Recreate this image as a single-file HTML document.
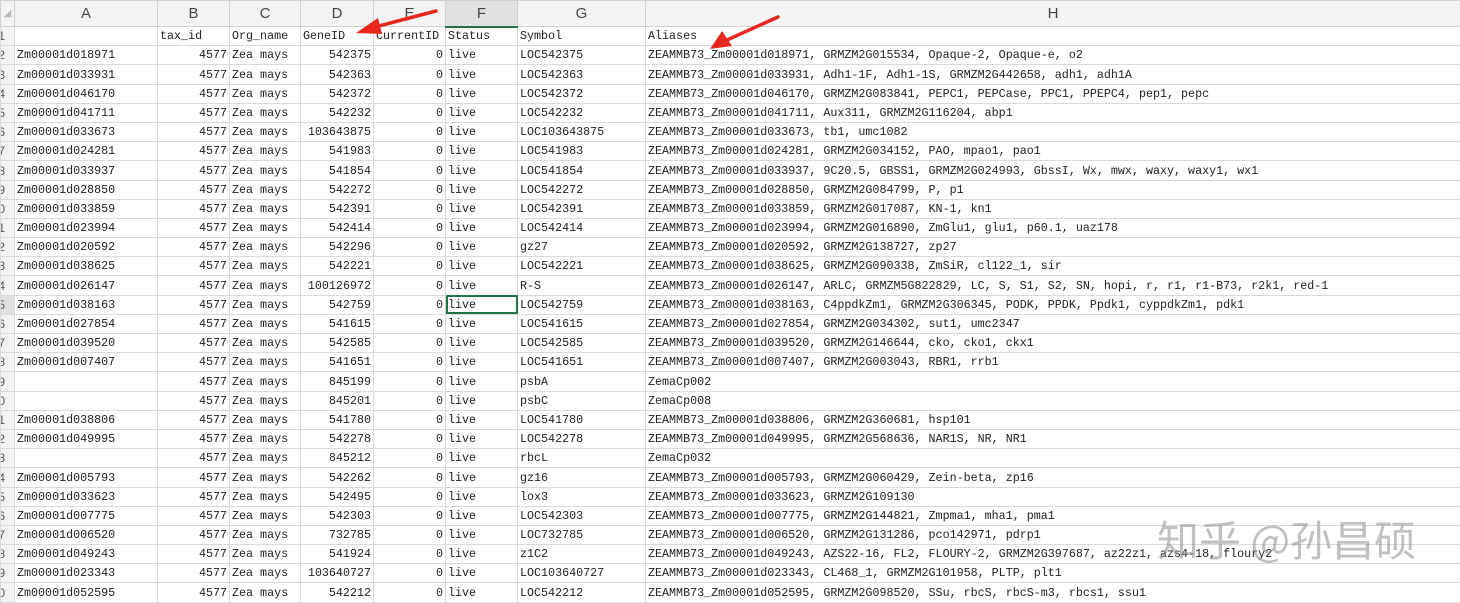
<!DOCTYPE html>
<html><head><meta charset="utf-8"><style>
*{margin:0;padding:0;box-sizing:border-box}
body{width:1460px;height:602px;overflow:hidden;background:#fff;position:relative;font-family:"Liberation Mono","Noto Sans CJK SC",monospace;font-size:11.7px;color:#222}
table{border-collapse:collapse;table-layout:fixed;position:absolute;left:0;top:0;width:1460px}
td{border:1px solid #dadada;height:19.2px;padding:0 2px;white-space:nowrap;overflow:hidden;line-height:17px;vertical-align:bottom}
tr.h td{height:26px;background:#f3f3f3;color:#444;font-family:"Liberation Sans",sans-serif;font-size:15px;text-align:center;vertical-align:middle;border-color:#d0d0d0}
tr.h td.sel{background:#e1e1e1;border-bottom:2px solid #217346}
td.n{background:#f3f3f3;padding:0;color:#555;font-family:"Liberation Sans",sans-serif;font-size:12px}
td.n span{display:block;width:30px;margin-left:-26px;text-align:right}
td.r{text-align:right}
td.cur{outline:2px solid #217346;outline-offset:-2px}
.wm{position:absolute;left:1157px;top:508px;font-family:"Noto Sans CJK SC",sans-serif;font-size:42px;color:rgba(140,140,140,.55);white-space:nowrap}
</style></head><body>
<table>
<colgroup><col style="width:14px"><col style="width:143px"><col style="width:72px"><col style="width:71px"><col style="width:73px"><col style="width:72px"><col style="width:72px"><col style="width:128px"><col style="width:815px"></colgroup>
<tr class="h"><td style="color:#bbb;font-size:10px">◢</td><td>A</td><td>B</td><td>C</td><td>D</td><td>E</td><td class="sel">F</td><td>G</td><td>H</td></tr>
<tr><td class="n"><span>1</span></td><td></td><td>tax_id</td><td>Org_name</td><td>GeneID</td><td>CurrentID</td><td>Status</td><td>Symbol</td><td>Aliases</td></tr>
<tr><td class="n"><span>2</span></td><td>Zm00001d018971</td><td class="r">4577</td><td>Zea mays</td><td class="r">542375</td><td class="r">0</td><td>live</td><td>LOC542375</td><td>ZEAMMB73_Zm00001d018971, GRMZM2G015534, Opaque-2, Opaque-e, o2</td></tr>
<tr><td class="n"><span>3</span></td><td>Zm00001d033931</td><td class="r">4577</td><td>Zea mays</td><td class="r">542363</td><td class="r">0</td><td>live</td><td>LOC542363</td><td>ZEAMMB73_Zm00001d033931, Adh1-1F, Adh1-1S, GRMZM2G442658, adh1, adh1A</td></tr>
<tr><td class="n"><span>4</span></td><td>Zm00001d046170</td><td class="r">4577</td><td>Zea mays</td><td class="r">542372</td><td class="r">0</td><td>live</td><td>LOC542372</td><td>ZEAMMB73_Zm00001d046170, GRMZM2G083841, PEPC1, PEPCase, PPC1, PPEPC4, pep1, pepc</td></tr>
<tr><td class="n"><span>5</span></td><td>Zm00001d041711</td><td class="r">4577</td><td>Zea mays</td><td class="r">542232</td><td class="r">0</td><td>live</td><td>LOC542232</td><td>ZEAMMB73_Zm00001d041711, Aux311, GRMZM2G116204, abp1</td></tr>
<tr><td class="n"><span>6</span></td><td>Zm00001d033673</td><td class="r">4577</td><td>Zea mays</td><td class="r">103643875</td><td class="r">0</td><td>live</td><td>LOC103643875</td><td>ZEAMMB73_Zm00001d033673, tb1, umc1082</td></tr>
<tr><td class="n"><span>7</span></td><td>Zm00001d024281</td><td class="r">4577</td><td>Zea mays</td><td class="r">541983</td><td class="r">0</td><td>live</td><td>LOC541983</td><td>ZEAMMB73_Zm00001d024281, GRMZM2G034152, PAO, mpao1, pao1</td></tr>
<tr><td class="n"><span>8</span></td><td>Zm00001d033937</td><td class="r">4577</td><td>Zea mays</td><td class="r">541854</td><td class="r">0</td><td>live</td><td>LOC541854</td><td>ZEAMMB73_Zm00001d033937, 9C20.5, GBSS1, GRMZM2G024993, GbssI, Wx, mwx, waxy, waxy1, wx1</td></tr>
<tr><td class="n"><span>9</span></td><td>Zm00001d028850</td><td class="r">4577</td><td>Zea mays</td><td class="r">542272</td><td class="r">0</td><td>live</td><td>LOC542272</td><td>ZEAMMB73_Zm00001d028850, GRMZM2G084799, P, p1</td></tr>
<tr><td class="n"><span>10</span></td><td>Zm00001d033859</td><td class="r">4577</td><td>Zea mays</td><td class="r">542391</td><td class="r">0</td><td>live</td><td>LOC542391</td><td>ZEAMMB73_Zm00001d033859, GRMZM2G017087, KN-1, kn1</td></tr>
<tr><td class="n"><span>11</span></td><td>Zm00001d023994</td><td class="r">4577</td><td>Zea mays</td><td class="r">542414</td><td class="r">0</td><td>live</td><td>LOC542414</td><td>ZEAMMB73_Zm00001d023994, GRMZM2G016890, ZmGlu1, glu1, p60.1, uaz178</td></tr>
<tr><td class="n"><span>12</span></td><td>Zm00001d020592</td><td class="r">4577</td><td>Zea mays</td><td class="r">542296</td><td class="r">0</td><td>live</td><td>gz27</td><td>ZEAMMB73_Zm00001d020592, GRMZM2G138727, zp27</td></tr>
<tr><td class="n"><span>13</span></td><td>Zm00001d038625</td><td class="r">4577</td><td>Zea mays</td><td class="r">542221</td><td class="r">0</td><td>live</td><td>LOC542221</td><td>ZEAMMB73_Zm00001d038625, GRMZM2G090338, ZmSiR, cl122_1, sir</td></tr>
<tr><td class="n"><span>14</span></td><td>Zm00001d026147</td><td class="r">4577</td><td>Zea mays</td><td class="r">100126972</td><td class="r">0</td><td>live</td><td>R-S</td><td>ZEAMMB73_Zm00001d026147, ARLC, GRMZM5G822829, LC, S, S1, S2, SN, hopi, r, r1, r1-B73, r2k1, red-1</td></tr>
<tr><td class="n" style="background:#e1e1e1"><span>15</span></td><td>Zm00001d038163</td><td class="r">4577</td><td>Zea mays</td><td class="r">542759</td><td class="r">0</td><td class="cur">live</td><td>LOC542759</td><td>ZEAMMB73_Zm00001d038163, C4ppdkZm1, GRMZM2G306345, PODK, PPDK, Ppdk1, cyppdkZm1, pdk1</td></tr>
<tr><td class="n"><span>16</span></td><td>Zm00001d027854</td><td class="r">4577</td><td>Zea mays</td><td class="r">541615</td><td class="r">0</td><td>live</td><td>LOC541615</td><td>ZEAMMB73_Zm00001d027854, GRMZM2G034302, sut1, umc2347</td></tr>
<tr><td class="n"><span>17</span></td><td>Zm00001d039520</td><td class="r">4577</td><td>Zea mays</td><td class="r">542585</td><td class="r">0</td><td>live</td><td>LOC542585</td><td>ZEAMMB73_Zm00001d039520, GRMZM2G146644, cko, cko1, ckx1</td></tr>
<tr><td class="n"><span>18</span></td><td>Zm00001d007407</td><td class="r">4577</td><td>Zea mays</td><td class="r">541651</td><td class="r">0</td><td>live</td><td>LOC541651</td><td>ZEAMMB73_Zm00001d007407, GRMZM2G003043, RBR1, rrb1</td></tr>
<tr><td class="n"><span>19</span></td><td></td><td class="r">4577</td><td>Zea mays</td><td class="r">845199</td><td class="r">0</td><td>live</td><td>psbA</td><td>ZemaCp002</td></tr>
<tr><td class="n"><span>20</span></td><td></td><td class="r">4577</td><td>Zea mays</td><td class="r">845201</td><td class="r">0</td><td>live</td><td>psbC</td><td>ZemaCp008</td></tr>
<tr><td class="n"><span>21</span></td><td>Zm00001d038806</td><td class="r">4577</td><td>Zea mays</td><td class="r">541780</td><td class="r">0</td><td>live</td><td>LOC541780</td><td>ZEAMMB73_Zm00001d038806, GRMZM2G360681, hsp101</td></tr>
<tr><td class="n"><span>22</span></td><td>Zm00001d049995</td><td class="r">4577</td><td>Zea mays</td><td class="r">542278</td><td class="r">0</td><td>live</td><td>LOC542278</td><td>ZEAMMB73_Zm00001d049995, GRMZM2G568636, NAR1S, NR, NR1</td></tr>
<tr><td class="n"><span>23</span></td><td></td><td class="r">4577</td><td>Zea mays</td><td class="r">845212</td><td class="r">0</td><td>live</td><td>rbcL</td><td>ZemaCp032</td></tr>
<tr><td class="n"><span>24</span></td><td>Zm00001d005793</td><td class="r">4577</td><td>Zea mays</td><td class="r">542262</td><td class="r">0</td><td>live</td><td>gz16</td><td>ZEAMMB73_Zm00001d005793, GRMZM2G060429, Zein-beta, zp16</td></tr>
<tr><td class="n"><span>25</span></td><td>Zm00001d033623</td><td class="r">4577</td><td>Zea mays</td><td class="r">542495</td><td class="r">0</td><td>live</td><td>lox3</td><td>ZEAMMB73_Zm00001d033623, GRMZM2G109130</td></tr>
<tr><td class="n"><span>26</span></td><td>Zm00001d007775</td><td class="r">4577</td><td>Zea mays</td><td class="r">542303</td><td class="r">0</td><td>live</td><td>LOC542303</td><td>ZEAMMB73_Zm00001d007775, GRMZM2G144821, Zmpma1, mha1, pma1</td></tr>
<tr><td class="n"><span>27</span></td><td>Zm00001d006520</td><td class="r">4577</td><td>Zea mays</td><td class="r">732785</td><td class="r">0</td><td>live</td><td>LOC732785</td><td>ZEAMMB73_Zm00001d006520, GRMZM2G131286, pco142971, pdrp1</td></tr>
<tr><td class="n"><span>28</span></td><td>Zm00001d049243</td><td class="r">4577</td><td>Zea mays</td><td class="r">541924</td><td class="r">0</td><td>live</td><td>z1C2</td><td>ZEAMMB73_Zm00001d049243, AZS22-16, FL2, FLOURY-2, GRMZM2G397687, az22z1, azs4-18, floury2</td></tr>
<tr><td class="n"><span>29</span></td><td>Zm00001d023343</td><td class="r">4577</td><td>Zea mays</td><td class="r">103640727</td><td class="r">0</td><td>live</td><td>LOC103640727</td><td>ZEAMMB73_Zm00001d023343, CL468_1, GRMZM2G101958, PLTP, plt1</td></tr>
<tr><td class="n"><span>30</span></td><td>Zm00001d052595</td><td class="r">4577</td><td>Zea mays</td><td class="r">542212</td><td class="r">0</td><td>live</td><td>LOC542212</td><td>ZEAMMB73_Zm00001d052595, GRMZM2G098520, SSu, rbcS, rbcS-m3, rbcs1, ssu1</td></tr>
</table>
<svg style="position:absolute;left:0;top:0" width="1460" height="602">
<g fill="#e8281e" stroke="#e8281e">
<line x1="436" y1="11" x2="375" y2="27" stroke-width="3.5" stroke-linecap="round"/>
<polygon points="356,33 378,18 382,34" stroke="none"/>
<line x1="778" y1="17" x2="727" y2="40" stroke-width="3.5" stroke-linecap="round"/>
<polygon points="710,49 722,31 732,46" stroke="none"/>
</g>
</svg>
<div class="wm">知乎 @孙昌硕</div>
</body></html>
